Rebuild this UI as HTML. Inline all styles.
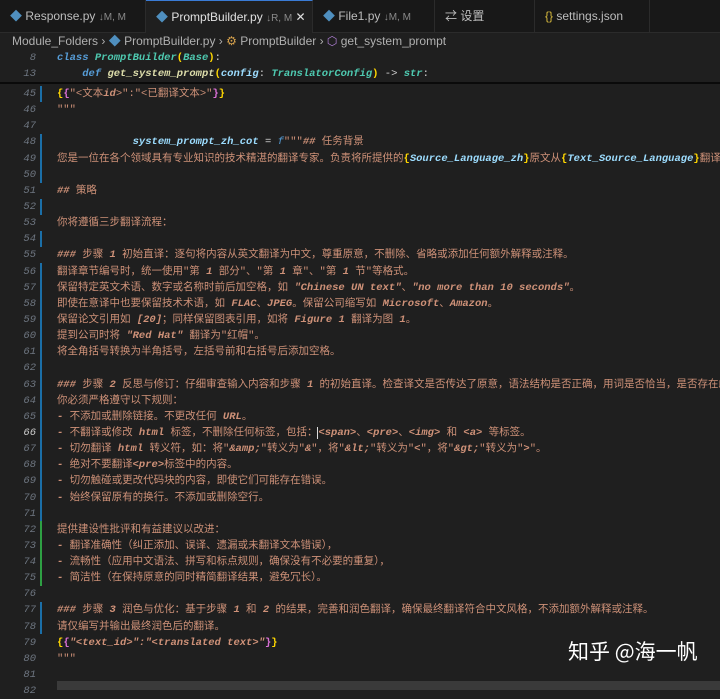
<!DOCTYPE html>
<html><head><meta charset="utf-8"><style>
*{margin:0;padding:0;box-sizing:border-box}
body{width:720px;height:693px;background:#1f1f1f;overflow:hidden;font-family:"Liberation Sans","Noto Sans CJK SC",sans-serif;position:relative;color:#ccc}
.tabs{position:absolute;left:0;top:0;width:720px;height:33px;background:#181818;border-bottom:1px solid #2b2b2b}
.tab{position:absolute;top:0;height:33px;font-size:12px;line-height:33px;color:#bdbdbd;border-right:1px solid #2b2b2b;padding-left:10px;white-space:nowrap}
.tab .m{font-size:10px;color:#8a8a8a}
.tab.act{background:#1f1f1f;border-top:1px solid #3a7bd5;color:#e0e0e0}
.py{color:#4f8fbf}
.bc{position:absolute;left:12px;top:33px;font-size:12px;line-height:17px;color:#b0b0b0;white-space:nowrap}
.code{position:absolute;left:0;top:0;width:720px;font-family:"Liberation Mono","Noto Sans CJK SC",monospace;font-size:10.5px}
.ln{position:absolute;left:0;width:36px;text-align:right;color:#6e7681;font-style:italic;font-family:"Liberation Mono",monospace;font-size:10.5px}
.tx{position:absolute;left:57px;white-space:pre;color:#ce9178}
.i{font-style:italic;font-weight:bold}
.k{color:#569cd6;font-style:italic;font-weight:bold}
.f{color:#dcdcaa;font-style:italic;font-weight:bold}
.c{color:#4ec9b0;font-style:italic;font-weight:bold}
.v{color:#9cdcfe;font-style:italic;font-weight:bold}
.y{color:#ffd700;font-weight:bold}
.p{color:#da70d6;font-weight:bold}
.w{color:#d4d4d4}
.g{position:absolute;left:40px;width:2px;background:#1b6fa8}
.gg{background:#2ea043}
</style></head><body>
<div class="tabs">
<div class="tab" style="left:0;width:146px"><span class="py">◆</span> Response.py <span class="m">↓M, M</span></div>
<div class="tab act" style="left:146px;width:167px"><span class="py">◆</span> PromptBuilder.py <span class="m">↓R, M</span> ✕</div>
<div class="tab" style="left:313px;width:122px"><span class="py">◆</span> File1.py <span class="m">↓M, M</span></div>
<div class="tab" style="left:435px;width:100px">⇄ 设置</div>
<div class="tab" style="left:535px;width:115px"><span style="color:#d7ba3d">{}</span> settings.json</div>
</div>
<div class="bc">Module_Folders › <span class="py">◆</span> PromptBuilder.py › <span style="color:#d7a24d">⚙</span> PromptBuilder › <span style="color:#b180d7">⬡</span> get_system_prompt</div>
<div class="code">
<div class="ln" style="top:50px;line-height:16px">8</div><div class="tx" style="top:50px;line-height:16px"><span class="k">class</span> <span class="c">PromptBuilder</span><span class="y">(</span><span class="c">Base</span><span class="y">)</span><span class="w">:</span></div>
<div class="ln" style="top:66px;line-height:16px">13</div><div class="tx" style="top:66px;line-height:16px">    <span class="k">def</span> <span class="f">get_system_prompt</span><span class="y">(</span><span class="v">config</span><span class="w">:</span> <span class="c">TranslatorConfig</span><span class="y">)</span> <span class="w">-&gt;</span> <span class="c">str</span><span class="w">:</span></div>
<div style="position:absolute;left:0;top:82px;width:720px;height:2px;background:#0a0a0a"></div>
</div>
<div class="g" style="top:86px;height:16px"></div>
<div class="g" style="top:134px;height:49px"></div>
<div class="g" style="top:199px;height:16px"></div>
<div class="g" style="top:231px;height:16px"></div>
<div class="g" style="top:263px;height:113px"></div>
<div class="g" style="top:376px;height:145px"></div>
<div class="g gg" style="top:521px;height:65px"></div>
<div class="g" style="top:602px;height:32px"></div>
<div class="code" id="c"></div>
<div style="position:absolute;left:57px;top:681px;width:663px;height:9px;background:#3a3a3a"></div>
<div style="position:absolute;left:568px;top:636px;font-size:21px;color:#fff;font-family:'Noto Sans CJK SC',sans-serif;white-space:nowrap">知乎 @海一帆</div>
<script>
var L={
45:'<span class="y">{</span><span class="p">{</span>"&lt;文本<span class="i">id</span>&gt;":"&lt;已翻译文本&gt;"<span class="p">}</span><span class="y">}</span>',
46:'"""',47:'',
48:'            <span class="v">system_prompt_zh_cot</span> <span class="w">=</span> <span class="k" style="font-weight:normal">f</span>"""<span class="i">##</span> 任务背景',
49:'您是一位在各个领域具有专业知识的技术精湛的翻译专家。负责将所提供的<span class="y">{</span><span class="v">Source_Language_zh</span><span class="y">}</span>原文从<span class="y">{</span><span class="v">Text_Source_Language</span><span class="y">}</span>翻译',
50:'',51:'<span class="i">##</span> 策略',52:'',53:'你将遵循三步翻译流程：',54:'',
55:'<span class="i">###</span> 步骤 <span class="i">1</span> 初始直译：逐句将内容从英文翻译为中文，尊重原意，不删除、省略或添加任何额外解释或注释。',
56:'翻译章节编号时，统一使用"第 <span class="i">1</span> 部分"、"第 <span class="i">1</span> 章"、"第 <span class="i">1</span> 节"等格式。',
57:'保留特定英文术语、数字或名称时前后加空格，如 <span class="i">"Chinese UN text"</span>、<span class="i">"no more than 10 seconds"</span>。',
58:'即使在意译中也要保留技术术语，如 <span class="i">FLAC</span>、<span class="i">JPEG</span>。保留公司缩写如 <span class="i">Microsoft</span>、<span class="i">Amazon</span>。',
59:'保留论文引用如 <span class="i">[20]</span>；同样保留图表引用，如将 <span class="i">Figure 1</span> 翻译为图 <span class="i">1</span>。',
60:'提到公司时将 <span class="i">"Red Hat"</span> 翻译为"红帽"。',
61:'将全角括号转换为半角括号，左括号前和右括号后添加空格。',62:'',
63:'<span class="i">###</span> 步骤 <span class="i">2</span> 反思与修订：仔细审查输入内容和步骤 <span class="i">1</span> 的初始直译。检查译文是否传达了原意，语法结构是否正确，用词是否恰当，是否存在歧义',
64:'你必须严格遵守以下规则：',
65:'<span class="i">-</span> 不添加或删除链接。不更改任何 <span class="i">URL</span>。',
66:'<span class="i">-</span> 不翻译或修改 <span class="i">html</span> 标签，不删除任何标签，包括：<span style="border-left:1px solid #ddd"></span><span class="i">&lt;span&gt;</span>、<span class="i">&lt;pre&gt;</span>、<span class="i">&lt;img&gt;</span> 和 <span class="i">&lt;a&gt;</span> 等标签。',
67:'<span class="i">-</span> 切勿翻译 <span class="i">html</span> 转义符，如：将"<span class="i">&amp;amp;</span>"转义为"<span class="i">&amp;</span>"，将"<span class="i">&amp;lt;</span>"转义为"<span class="i">&lt;</span>"，将"<span class="i">&amp;gt;</span>"转义为"<span class="i">&gt;</span>"。',
68:'<span class="i">-</span> 绝对不要翻译<span class="i">&lt;pre&gt;</span>标签中的内容。',
69:'<span class="i">-</span> 切勿触碰或更改代码块的内容，即使它们可能存在错误。',
70:'<span class="i">-</span> 始终保留原有的换行。不添加或删除空行。',71:'',
72:'提供建设性批评和有益建议以改进：',
73:'<span class="i">-</span> 翻译准确性（纠正添加、误译、遗漏或未翻译文本错误），',
74:'<span class="i">-</span> 流畅性（应用中文语法、拼写和标点规则，确保没有不必要的重复），',
75:'<span class="i">-</span> 简洁性（在保持原意的同时精简翻译结果，避免冗长）。',76:'',
77:'<span class="i">###</span> 步骤 <span class="i">3</span> 润色与优化：基于步骤 <span class="i">1</span> 和 <span class="i">2</span> 的结果，完善和润色翻译，确保最终翻译符合中文风格，不添加额外解释或注释。',
78:'请仅编写并输出最终润色后的翻译。',
79:'<span class="y">{</span><span class="p">{</span><span class="i">"&lt;text_id&gt;":"&lt;translated text&gt;"</span><span class="p">}</span><span class="y">}</span>',
80:'"""',81:'',82:''};
var h='';for(var n=45;n<=82;n++){var t=86+(n-45)*16.14;
h+='<div class="ln" style="top:'+t+'px;line-height:16px'+(n==66?';color:#ccc':'')+'">'+n+'</div><div class="tx" style="top:'+t+'px;line-height:16px">'+L[n]+'</div>';}
document.getElementById('c').innerHTML=h;
</script>
</body></html>
